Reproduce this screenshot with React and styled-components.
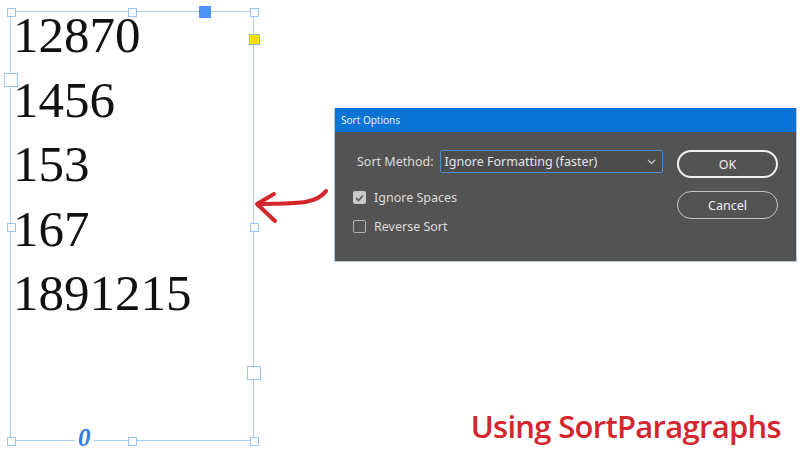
import styled, { createGlobalStyle } from "styled-components";

const GlobalStyle = createGlobalStyle`
  html, body { margin: 0; padding: 0; background: #fff; }
  * { box-sizing: border-box; }
`;

const Page = styled.div`
  width: 807px;
  height: 453px;
  display: flex;
  align-items: flex-start;
  padding: 11px 0 0 10px;
`;

const TextFrame = styled.div`
  position: relative;
  width: 244px;
  height: 430px;
  border: 1px solid #a9cbf8;
  padding: 0 0 0 2px;
`;

const Line = styled.div`
  font-family: "Liberation Serif", "Times New Roman", serif;
  font-size: 51px;
  line-height: 64.5px;
  color: #111;
  height: 64.5px;
  margin-top: ${(p) => (p.$first ? "-9px" : "0")};
`;

const Handle = styled.span`
  position: absolute;
  width: ${(p) => p.$size || 9}px;
  height: ${(p) => p.$size || 9}px;
  margin: ${(p) => -(p.$size || 9) / 2}px 0 0 ${(p) => -(p.$size || 9) / 2}px;
  background: ${(p) => p.$fill || "#fff"};
  border: 1px solid ${(p) => p.$edge || "#9cc3f7"};
`;

const Overflow = styled.span`
  position: absolute;
  left: 64px;
  bottom: -10px;
  font-family: "Liberation Serif", serif;
  font-style: italic;
  font-weight: bold;
  font-size: 25px;
  line-height: 25px;
  color: #2f7ae6;
  background: #fff;
  padding: 0 3px;
`;

const Side = styled.div`
  flex: 1;
  height: 442px;
  display: flex;
  flex-direction: column;
  padding-top: 97px;
`;

const Row = styled.div`
  display: flex;
  align-items: flex-start;
`;

const Arrow = styled.svg`
  width: 80px;
  height: 45px;
  margin-top: 75px;
  flex: none;
`;

const Dialog = styled.div`
  width: 463px;
  border: 1px solid #b9c9dc;
  border-top: none;
  background: #535353;
  font-family: "Noto Sans", "Open Sans", sans-serif;
`;

const TitleBar = styled.div`
  height: 24px;
  background: #0a74d6;
  color: #e8f1fb;
  font-size: 10px;
  line-height: 24px;
  padding-left: 6px;
`;

const Body = styled.div`
  display: flex;
  justify-content: space-between;
  padding: 18px 18px 20px 18px;
`;

const Form = styled.div`
  display: flex;
  flex-direction: column;
`;

const MethodRow = styled.div`
  display: flex;
  align-items: center;
  padding-left: 4px;
  margin-bottom: 10px;
`;

const Label = styled.span`
  color: #dcdcdc;
  font-size: 12.5px;
  margin-right: 6px;
`;

const Select = styled.div`
  width: 223px;
  height: 23px;
  border: 1px solid #4a90d9;
  border-radius: 2px;
  background: #4c4c4c;
  color: #e4e4e4;
  font-size: 12.5px;
  display: flex;
  align-items: center;
  justify-content: space-between;
  padding: 0 6px 0 4px;
`;

const CheckRow = styled.label`
  display: flex;
  align-items: center;
  height: 29px;
  color: #dcdcdc;
  font-size: 12.5px;
`;

const Box = styled.span`
  width: 13px;
  height: 13px;
  border-radius: 2px;
  margin-right: 8px;
  display: flex;
  align-items: center;
  justify-content: center;
  background: ${(p) => (p.$checked ? "#c9c9c9" : "transparent")};
  border: ${(p) => (p.$checked ? "none" : "1.5px solid #b4b4b4")};
`;

const Buttons = styled.div`
  display: flex;
  flex-direction: column;
  gap: 13px;
`;

const Button = styled.button`
  width: 101px;
  height: 28px;
  border-radius: 14px;
  background: transparent;
  border: ${(p) => (p.$primary ? "2px solid #f0f0f0" : "1px solid #c4c4c4")};
  color: #f0f0f0;
  font-family: "Noto Sans", sans-serif;
  font-size: 12.5px;
  padding: 0;
`;

const Caption = styled.div`
  margin-top: auto;
  margin-bottom: 7px;
  align-self: flex-end;
  margin-right: 26px;
  font-family: "Open Sans", "Noto Sans", sans-serif;
  font-weight: 600;
  font-size: 31px;
  letter-spacing: -0.7px;
  color: #d4262e;
  line-height: 40px;
`;

const numbers = ["12870", "1456", "153", "167", "1891215"];

const handles = [
  { x: 0, y: 0 },
  { x: 121, y: 0 },
  { x: 194, y: 0, size: 12, fill: "#4d93f7", edge: "#4d93f7" },
  { x: 243, y: 0 },
  { x: 243, y: 27, size: 11, fill: "#ffdd00", edge: "#8fb7ea" },
  { x: 0, y: 68, size: 14 },
  { x: 0, y: 215 },
  { x: 243, y: 215 },
  { x: 243, y: 361, size: 14 },
  { x: 0, y: 429 },
  { x: 121, y: 429 },
  { x: 243, y: 429 },
];

export default function App() {
  return (
    <>
      <GlobalStyle />
      <Page>
        <TextFrame>
          {numbers.map((n, i) => (
            <Line key={n} $first={i === 0}>{n}</Line>
          ))}
          {handles.map((h, i) => (
            <Handle
              key={i}
              style={{ left: h.x, top: h.y }}
              $size={h.size}
              $fill={h.fill}
              $edge={h.edge}
            />
          ))}
          <Overflow>0</Overflow>
        </TextFrame>
        <Side>
          <Row>
            <Arrow viewBox="0 0 80 45">
              <path
                d="M72 8 C 62 22, 40 20, 4 21 M20 11 L3 21 L21 38"
                fill="none"
                stroke="#d3262c"
                strokeWidth="4"
                strokeLinecap="round"
                strokeLinejoin="round"
              />
            </Arrow>
            <Dialog>
              <TitleBar>Sort Options</TitleBar>
              <Body>
                <Form>
                  <MethodRow>
                    <Label>Sort Method:</Label>
                    <Select>
                      <span>Ignore Formatting (faster)</span>
                      <svg width="9" height="6" viewBox="0 0 9 6">
                        <path d="M1 1 L4.5 4.5 L8 1" fill="none" stroke="#cfcfcf" strokeWidth="1.2" />
                      </svg>
                    </Select>
                  </MethodRow>
                  <CheckRow>
                    <Box $checked>
                      <svg width="9" height="8" viewBox="0 0 9 8">
                        <path d="M1 4 L3.5 6.5 L8 1.5" fill="none" stroke="#555" strokeWidth="1.6" />
                      </svg>
                    </Box>
                    Ignore Spaces
                  </CheckRow>
                  <CheckRow>
                    <Box />
                    Reverse Sort
                  </CheckRow>
                </Form>
                <Buttons>
                  <Button $primary>OK</Button>
                  <Button>Cancel</Button>
                </Buttons>
              </Body>
            </Dialog>
          </Row>
          <Caption>Using SortParagraphs</Caption>
        </Side>
      </Page>
    </>
  );
}
